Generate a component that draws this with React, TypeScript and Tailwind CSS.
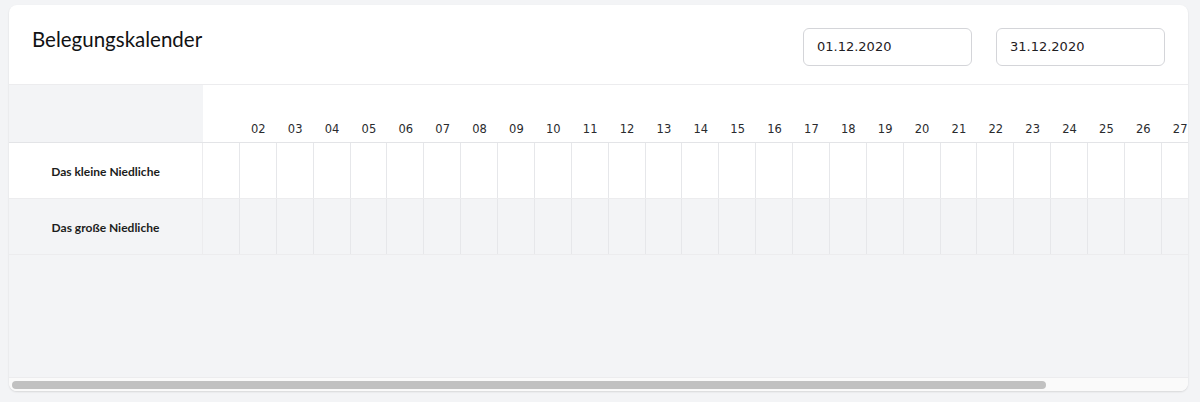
import React from 'react';

const rooms = [
  { name: 'Das kleine Niedliche', shaded: false },
  { name: 'Das große Niedliche', shaded: true },
];

const days = Array.from({ length: 31 }, (_, i) => i + 1);

function DateInput({ value }: { value: string }) {
  return (
    <div className="flex h-[38px] w-[169px] items-center rounded-md border border-[#d4d5d9] bg-white pl-[13px] text-[13px] text-[#1f2023] [font-family:'DejaVu_Sans',sans-serif]">
      {value}
    </div>
  );
}

export default function App() {
  return (
    <div className="min-h-screen bg-[#f3f4f6] pl-[9px] pt-[5px] [font-family:Lato,'Noto_Sans',sans-serif]">
      <div className="w-[1179px] overflow-hidden rounded-lg bg-white shadow-[0_1px_2px_rgba(0,0,0,0.12)]">
        <div className="flex h-[80px] justify-between border-b border-[#ececee] pl-[23px] pr-[23px]">
          <h1 className="pt-[21px] text-[20.5px] leading-[26px] text-[#111214]">Belegungskalender</h1>
          <div className="flex gap-[24px] pt-[23px]">
            <DateInput value="01.12.2020" />
            <DateInput value="31.12.2020" />
          </div>
        </div>

        <div className="overflow-hidden">
          <div className="w-[1338px]">
            <div className="flex h-[58px] border-b border-[#e3e4e7]">
              <div className="w-[194px] shrink-0 bg-[#f3f4f6]" />
              {days.map((d) => (
                <div
                  key={d}
                  className="flex w-[36.88px] shrink-0 items-end justify-center pb-[4px] text-[11.5px] text-[#2a2b2e] [font-family:'DejaVu_Sans',sans-serif]"
                >
                  {d === 1 ? '' : String(d).padStart(2, '0')}
                </div>
              ))}
            </div>

            {rooms.map((r) => (
              <div
                key={r.name}
                className={`flex h-[56px] border-b border-[#ececee] ${r.shaded ? 'bg-[#f3f4f6]' : 'bg-white'}`}
              >
                <div className="flex w-[194px] shrink-0 items-center justify-center border-r border-[#ececee] pt-[2px] text-[12px] font-bold text-[#1c1d20]">
                  {r.name}
                </div>
                {days.map((d) => (
                  <div key={d} className="w-[36.88px] shrink-0 border-r border-[#e6e7ea]" />
                ))}
              </div>
            ))}

            <div className="h-[122px] bg-[#f3f4f6]" />
          </div>
        </div>

        <div className="h-[14px] border-t border-[#ececee] bg-[#fafafa] pl-[3px] pt-[3px]">
          <div className="h-[8px] w-[1034px] rounded-full bg-[#c1c1c1]" />
        </div>
      </div>
    </div>
  );
}
